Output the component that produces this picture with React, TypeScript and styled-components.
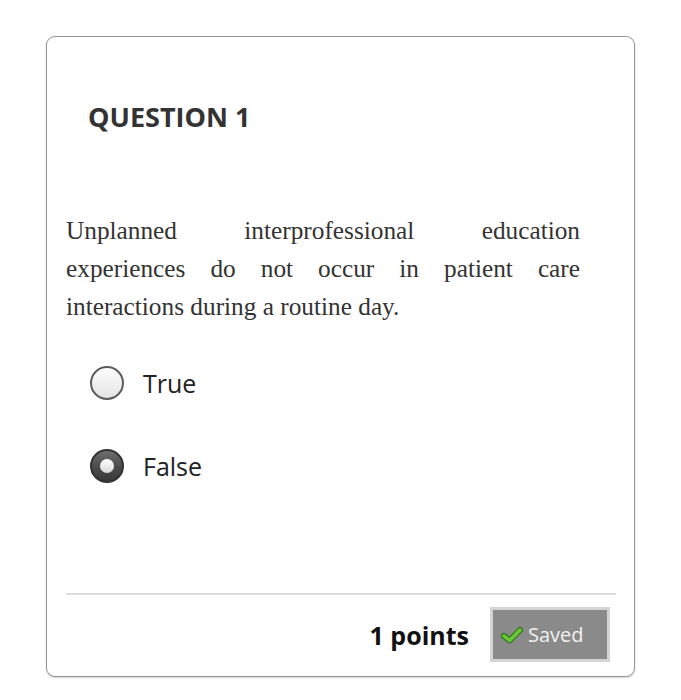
import styled, { createGlobalStyle } from 'styled-components'

const GlobalStyle = createGlobalStyle`
  body {
    margin: 0;
    background: #fff;
  }
`

const Page = styled.div`
  padding: 36px 46px 23px 46px;
  width: 681px;
  box-sizing: border-box;
`

const Card = styled.div`
  box-sizing: border-box;
  width: 589px;
  height: 641px;
  border: 1.5px solid #969696;
  border-radius: 9px;
  background: #fff;
  box-shadow: 0 1px 2px rgba(0, 0, 0, 0.18);
  display: flex;
  flex-direction: column;
  padding: 0 18px 14px 19px;
`

const Title = styled.h2`
  margin: 62px 0 0 22px;
  font-family: 'Open Sans', sans-serif;
  font-weight: 700;
  font-size: 27px;
  line-height: 36px;
  color: #333;
`

const Prompt = styled.p`
  margin: 76px 36px 0 0;
  font-family: 'Liberation Serif', 'Times New Roman', serif;
  font-size: 25.3px;
  line-height: 38px;
  color: #333;
  text-align: justify;
`

const Options = styled.div`
  display: flex;
  flex-direction: column;
  gap: 49px;
  margin: 41px 0 0 24px;
`

const Option = styled.label`
  display: flex;
  align-items: center;
  gap: 19px;
  font-family: 'Open Sans', sans-serif;
  font-size: 25px;
  color: #222;
`

const Radio = styled.span<{ checked?: boolean }>`
  box-sizing: border-box;
  width: 34px;
  height: 34px;
  border-radius: 50%;
  display: flex;
  align-items: center;
  justify-content: center;
  border: 2px solid ${({ checked }) => (checked ? '#333' : '#5c5c5c')};
  background: ${({ checked }) =>
    checked
      ? 'linear-gradient(180deg, #6e6e6e 0%, #4a4a4a 55%, #3a3a3a 100%)'
      : 'linear-gradient(180deg, #fdfdfd 0%, #e4e4e4 100%)'};

  &::after {
    content: '';
    display: ${({ checked }) => (checked ? 'block' : 'none')};
    width: 14px;
    height: 14px;
    border-radius: 50%;
    background: linear-gradient(180deg, #fff 0%, #d8d8d8 100%);
  }
`

const Spacer = styled.div`
  flex: 1;
`

const Divider = styled.hr`
  margin: 0;
  border: none;
  border-top: 2px solid #dcdcdc;
`

const Footer = styled.div`
  display: flex;
  justify-content: flex-end;
  align-items: center;
  gap: 21px;
  margin-top: 12px;
  padding-right: 6px;
`

const Points = styled.span`
  font-family: 'Open Sans', sans-serif;
  font-weight: 700;
  font-size: 25px;
  color: #111;
`

const SavedButton = styled.div`
  box-sizing: border-box;
  width: 120px;
  height: 55px;
  border: 3px solid #d4d4d4;
  background: #8a8a8a;
  display: flex;
  align-items: center;
  gap: 5px;
  padding-left: 8px;
  font-family: 'Open Sans', sans-serif;
  font-size: 20px;
  color: #f2f2f2;
`

const Check = () => (
  <svg width="22" height="18" viewBox="0 0 22 18">
    <path d="M3 10 L8.5 14.5 L19 4" fill="none" stroke="#2f7a16" strokeWidth="6" strokeLinecap="round" strokeLinejoin="round" />
    <path d="M3 10 L8.5 14.5 L19 4" fill="none" stroke="#6cc83a" strokeWidth="3.5" strokeLinecap="round" strokeLinejoin="round" />
  </svg>
)

export default function App() {
  return (
    <Page>
      <GlobalStyle />
      <Card>
        <Title>QUESTION 1</Title>
        <Prompt>
          Unplanned interprofessional education experiences do not occur in patient care interactions during a
          routine day.
        </Prompt>
        <Options>
          <Option>
            <Radio />
            True
          </Option>
          <Option>
            <Radio checked />
            False
          </Option>
        </Options>
        <Spacer />
        <Divider />
        <Footer>
          <Points>1 points</Points>
          <SavedButton>
            <Check />
            Saved
          </SavedButton>
        </Footer>
      </Card>
    </Page>
  )
}
